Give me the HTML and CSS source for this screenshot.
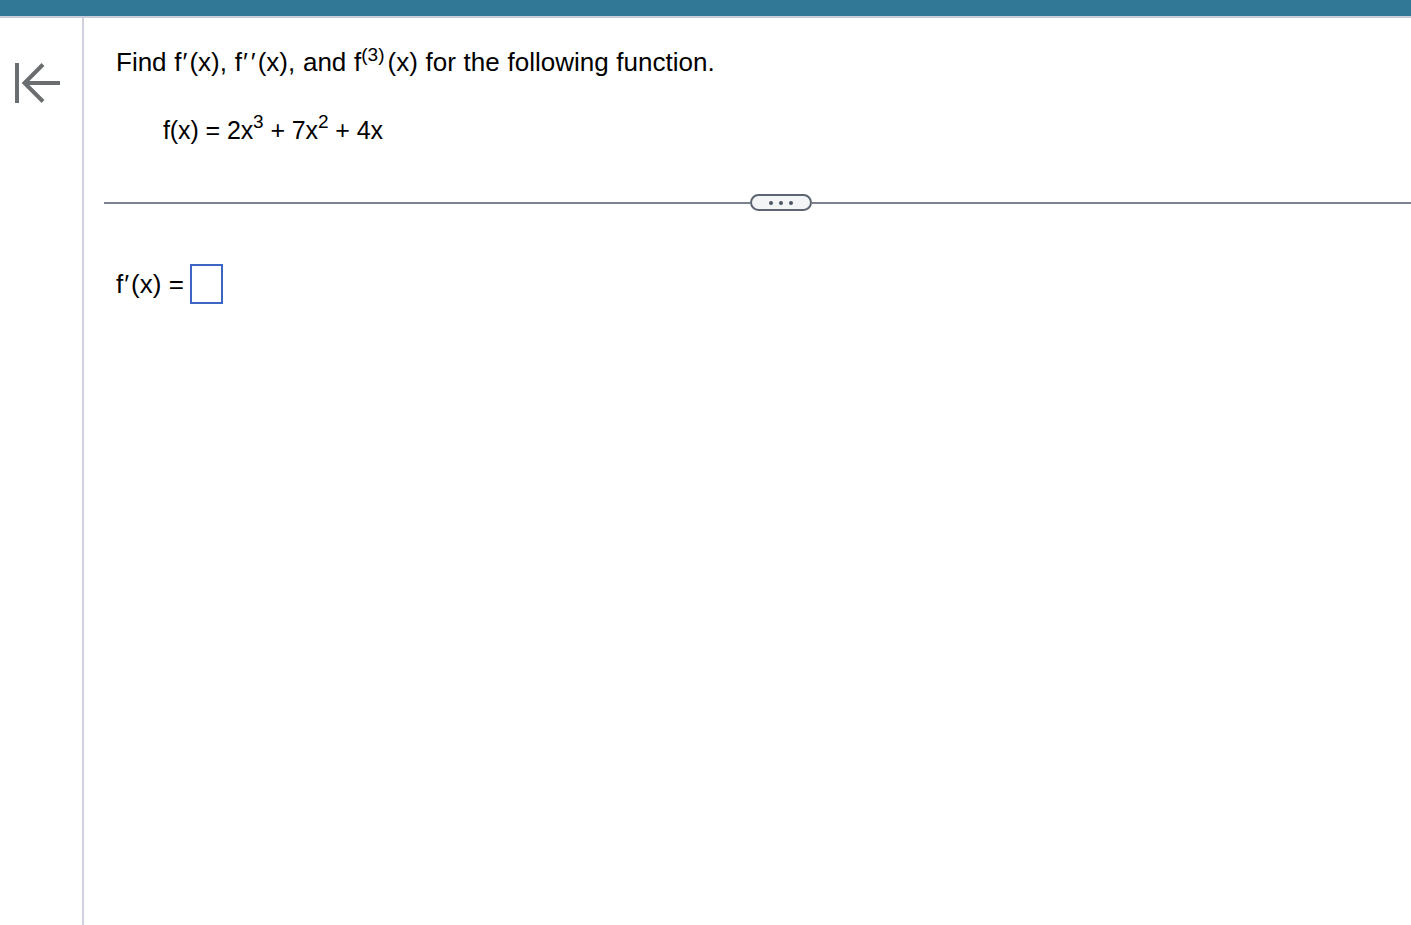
FILE: index.html
```html
<!DOCTYPE html>
<html>
<head>
<meta charset="utf-8">
<link rel="stylesheet" href="styles.css">
</head>
<body>
<div class="topbar"></div>
<div class="main">
  <aside class="side">
    <svg class="collapse" width="48" height="40" viewBox="0 0 48 40">
      <path d="M3 0 V40" stroke="#6b6e70" stroke-width="4" fill="none"/>
      <path d="M46 20 H11 M29 1.5 L10.5 20 L29 38.5" stroke="#6b6e70" stroke-width="4" fill="none" stroke-linejoin="miter"/>
    </svg>
  </aside>
  <section class="content">
    <p class="prompt">Find f<span class="pr">′</span>(x), f<span class="pr">′</span><span class="pr">′</span>(x), and f<sup>(3)</sup>(x) for the following function.</p>
    <p class="eq">f(x) = 2x<sup>3</sup> + 7x<sup>2</sup> + 4x</p>
    <div class="divider">
      <span class="line"></span>
      <button class="more"><i></i><i></i><i></i></button>
      <span class="line"></span>
    </div>
    <div class="answer">
      <span class="label">f<span class="pr">′</span>(x) =</span>
      <span class="box"></span>
    </div>
  </section>
</div>
</body>
</html>
```

FILE: styles.css
```css
html, body {
  margin: 0;
  padding: 0;
  background: #fff;
  font-family: "Liberation Sans", Arial, sans-serif;
  color: #000;
}
.topbar {
  height: 16px;
  background: #317796;
  border-bottom: 2px solid #c9ccd9;
}
.main {
  display: flex;
  height: 907px;
}
.side {
  width: 82px;
  flex: 0 0 82px;
  border-right: 2px solid #cfd1dc;
  box-sizing: content-box;
}
.collapse {
  display: block;
  margin: 45px 0 0 14px;
}
.content {
  flex: 1;
  padding-left: 20px;
}
.pr {
  display: inline-block;
  padding: 0 2px 0 1px;
}
.prompt {
  margin: 29px 0 0 12px;
  font-size: 26px;
  line-height: 30px;
  word-spacing: 0.5px;
}
.prompt sup {
  font-size: 19px;
  line-height: 0;
  vertical-align: 10px;
  margin-right: 3px;
}
.eq {
  margin: 38px 0 0 59px;
  font-size: 25px;
  letter-spacing: -0.1px;
  line-height: 30px;
}
.eq sup {
  font-size: 19px;
  line-height: 0;
  vertical-align: 11px;
}
.divider {
  display: flex;
  align-items: center;
  margin-top: 49px;
}
.line {
  height: 2px;
  background: #7b818d;
}
.line:first-child {
  width: 646px;
}
.line:last-child {
  flex: 1;
}
.more {
  width: 62px;
  height: 17px;
  border: 2px solid #5d6572;
  border-radius: 9px;
  background: #f2f4f6;
  padding: 0;
  display: flex;
  justify-content: center;
  align-items: center;
  gap: 6px;
}
.more i {
  width: 4px;
  height: 4px;
  border-radius: 50%;
  background: #4b5563;
}
.answer {
  display: flex;
  align-items: center;
  margin: 53px 0 0 12px;
}
.label {
  font-size: 26px;
}
.box {
  width: 29px;
  height: 36px;
  border: 2px solid #3b66c4;
  margin-left: 6px;
}
```
